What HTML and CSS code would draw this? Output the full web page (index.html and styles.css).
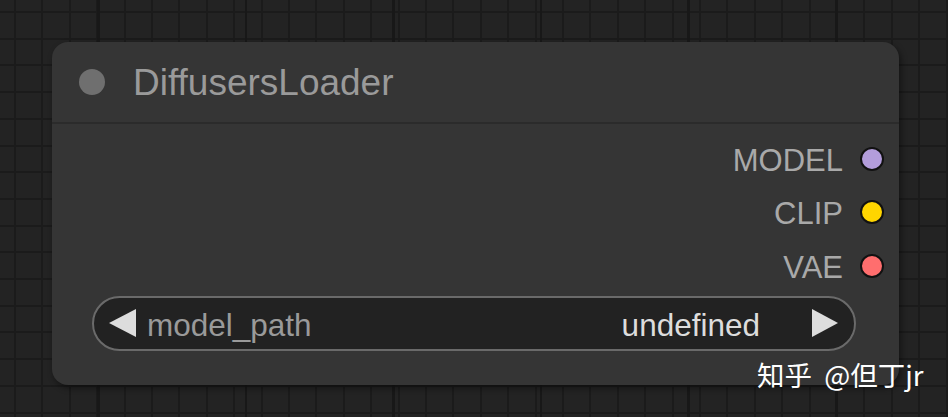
FILE: index.html
```html
<!DOCTYPE html>
<html>
<head>
<meta charset="utf-8">
<link rel="stylesheet" href="styles.css">
</head>
<body>
<div class="canvas">
  <div class="node">
    <div class="node-title">
      <span class="title-dot"></span>
      <span class="title-text">DiffusersLoader</span>
    </div>
    <div class="node-body">
      <div class="outputs">
        <div class="output"><span class="out-label">MODEL</span><span class="slot slot-model"></span></div>
        <div class="output"><span class="out-label">CLIP</span><span class="slot slot-clip"></span></div>
        <div class="output"><span class="out-label">VAE</span><span class="slot slot-vae"></span></div>
      </div>
      <div class="widget">
        <span class="arrow arrow-left"></span>
        <span class="w-label">model_path</span>
        <span class="w-value">undefined</span>
        <span class="arrow arrow-right"></span>
      </div>
    </div>
  </div>
  <div class="watermark">知乎 @但丁jr</div>
</div>
</body>
</html>
```
FILE: styles.css
```css
html, body {
  margin: 0;
  padding: 0;
}
body {
  width: 948px;
  height: 417px;
  overflow: hidden;
  font-family: "Liberation Sans", Arial, sans-serif;
  background-color: #232323;
  background-image:
    repeating-linear-gradient(90deg, transparent 0, transparent 97px, #181818 97px, #181818 100px, transparent 100px, transparent 147.5px),
    repeating-linear-gradient(90deg, transparent 0, transparent 14px, #1b1b1b 14px, #1b1b1b 16px, transparent 16px, transparent 27.4px),
    repeating-linear-gradient(180deg, transparent 0, transparent 11px, #1b1b1b 11px, #1b1b1b 13px, transparent 13px, transparent 26.7px);
}
.canvas {
  position: relative;
  width: 948px;
  height: 417px;
  padding: 42px 0 0 52px;
  box-sizing: border-box;
}
.node {
  width: 847px;
  height: 343px;
  background: #353535;
  border-radius: 16px;
  box-shadow: 2px 3px 6px rgba(0, 0, 0, 0.45);
  display: flex;
  flex-direction: column;
  overflow: hidden;
}
.node-title {
  height: 80px;
  display: flex;
  align-items: center;
  padding-left: 27px;
  border-bottom: 2px solid #2b2b2b;
  flex-shrink: 0;
}
.title-dot {
  width: 26px;
  height: 26px;
  border-radius: 50%;
  background: #6f6f6f;
}
.title-text {
  margin-left: 28px;
  color: #9a9a9a;
  font-size: 37px;
  position: relative;
  top: 1px;
}
.node-body {
  display: flex;
  flex-direction: column;
  padding-top: 8px;
}
.outputs {
  display: flex;
  flex-direction: column;
  align-items: flex-end;
  padding-right: 15px;
}
.output {
  height: 53.5px;
  display: flex;
  align-items: center;
  gap: 17px;
}
.out-label {
  color: #a9a9a9;
  font-size: 31px;
  position: relative;
  top: 2px;
}
.slot {
  width: 20px;
  height: 20px;
  border-radius: 50%;
  border: 2px solid #111;
}
.slot-model { background: #b39ddb; }
.slot-clip { background: #ffd500; }
.slot-vae { background: #ff6e6e; }
.widget {
  margin: 3px 43px 0 40px;
  height: 51px;
  border: 2px solid #6a6a6a;
  border-radius: 28px;
  background: #222222;
  display: flex;
  align-items: center;
  padding: 0 16px 0 15px;
}
.arrow {
  width: 0;
  height: 0;
  border-top: 14px solid transparent;
  border-bottom: 14px solid transparent;
}
.arrow-left {
  border-right: 27px solid #dddddd;
}
.arrow-right {
  border-left: 26px solid #dddddd;
}
.w-label {
  margin-left: 11px;
  color: #9a9a9a;
  font-size: 31.5px;
  flex: 1;
  position: relative;
  top: 2px;
}
.w-value {
  color: #dddddd;
  font-size: 31.5px;
  margin-right: 52px;
  position: relative;
  top: 2px;
}
.watermark {
  position: absolute;
  left: 757px;
  top: 355px;
  color: #ffffff;
  font-family: "Noto Sans CJK SC", "Liberation Sans", sans-serif;
  font-size: 27.5px;
  line-height: 38px;
  word-spacing: 6px;
  white-space: nowrap;
}
```
